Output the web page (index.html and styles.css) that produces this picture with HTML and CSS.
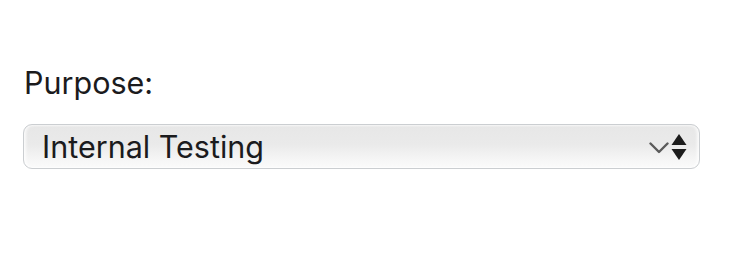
FILE: index.html
```html
<!DOCTYPE html>
<html>
<head>
<meta charset="utf-8">
<link rel="stylesheet" href="styles.css">
</head>
<body>
<div class="field">
  <label class="label">Purpose:</label>
  <div class="select">
    <span class="value">Internal Testing</span>
    <span class="icons">
      <svg class="chev" width="20" height="12" viewBox="0 0 20 12"><path d="M1.5 1.5 L10 10 L18.5 1.5" fill="none" stroke="#5b5b5b" stroke-width="2.4" stroke-linecap="round" stroke-linejoin="round"/></svg>
      <svg class="arrows" width="16" height="28" viewBox="0 0 16 28"><path d="M8 1 L15.5 12 L0.5 12 Z" fill="#1c1c1c"/><path d="M0.5 16 L15.5 16 L8 27 Z" fill="#1c1c1c"/></svg>
    </span>
  </div>
</div>
</body>
</html>
```
FILE: styles.css
```css
html, body { margin: 0; padding: 0; background: #fff; }
body { width: 738px; height: 276px; font-family: Inter, "Liberation Sans", Arial, sans-serif; color: #1b1b1d; }
.field { display: flex; flex-direction: column; padding: 65px 38px 0 23px; }
.label { font-size: 30.5px; line-height: 36px; padding-left: 1px; margin-bottom: 23px; }
.select {
  box-sizing: border-box;
  display: flex; align-items: center; justify-content: space-between;
  height: 45px; border: 1.5px solid #cbced1; border-radius: 9px;
  background: linear-gradient(#e7e7e7 0%, #eaeaea 45%, #f7f7f7 85%, #fbfbfb 100%);
  box-shadow: inset 2px 0 3px rgba(255,255,255,0.8), inset -2px 0 3px rgba(255,255,255,0.8);
  padding: 0 12px 0 18px;
}
.value { font-size: 30.5px; line-height: 36px; }
.icons { display: flex; align-items: center; gap: 2px; }
.chev { display: block; margin-top: 2px; }
.arrows { display: block; }
```
